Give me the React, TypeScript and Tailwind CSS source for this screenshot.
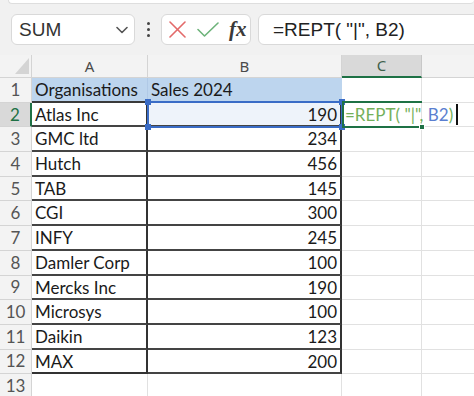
import React from "react";

const rows: [string, string][] = [
  ["Organisations", "Sales 2024"],
  ["Atlas Inc", "190"],
  ["GMC ltd", "234"],
  ["Hutch", "456"],
  ["TAB", "145"],
  ["CGI", "300"],
  ["INFY", "245"],
  ["Damler Corp", "100"],
  ["Mercks Inc", "190"],
  ["Microsys", "100"],
  ["Daikin", "123"],
  ["MAX", "200"],
  ["", ""],
];

function Handle({ cls }: { cls: string }) {
  return <div className={`absolute w-[6px] h-[6px] bg-[#3a6cc6] ${cls}`} />;
}

export default function App() {
  return (
    <div className="relative w-[474px] h-[396px] overflow-hidden bg-[#f1f1f1] font-['Lato',sans-serif]">
      {/* top band */}
      <div className="ml-[8px] h-[4px] rounded-b-[6px] bg-white border-b border-l border-[#dedede]" />

      {/* toolbar */}
      <div className="mt-[10px] h-[31px] flex items-stretch">
        <div className="ml-[11px] w-[124px] rounded-[6px] bg-white border border-[#d9d9d9] flex items-center pl-[7px] pr-[6px]">
          <span className="font-['Liberation_Sans',sans-serif] text-[19px] text-[#333] leading-none flex-1">SUM</span>
          <svg width="12" height="8" viewBox="0 0 12 8">
            <polyline points="1,1.5 6,6.5 11,1.5" fill="none" stroke="#555" strokeWidth="1.6" strokeLinecap="round" strokeLinejoin="round" />
          </svg>
        </div>
        <div className="w-[26px] flex flex-col items-center justify-center gap-[3px]">
          <div className="w-[3px] h-[3px] rounded-full bg-[#444]" />
          <div className="w-[3px] h-[3px] rounded-full bg-[#444]" />
          <div className="w-[3px] h-[3px] rounded-full bg-[#444]" />
        </div>
        <div className="w-[90px] rounded-[6px] bg-white border border-[#d9d9d9] flex items-center pl-[6px]">
          <svg width="17" height="17" viewBox="0 0 17 17" className="ml-[1px]">
            <line x1="1" y1="1" x2="16" y2="16" stroke="#e36a6a" strokeWidth="1.6" strokeLinecap="round" />
            <line x1="16" y1="1" x2="1" y2="16" stroke="#e36a6a" strokeWidth="1.6" strokeLinecap="round" />
          </svg>
          <svg width="22" height="15" viewBox="0 0 22 15" className="ml-[11px]">
            <polyline points="1,7.5 7.5,14 21,1" fill="none" stroke="#6db37a" strokeWidth="1.6" strokeLinecap="round" strokeLinejoin="round" />
          </svg>
          <span className="ml-[10px] font-['Liberation_Serif',serif] italic font-bold text-[21px] leading-none text-[#3a3a3a]">fx</span>
        </div>
        <div className="ml-[7px] flex-1 -mr-[10px] rounded-[6px] bg-white border border-[#d9d9d9] flex items-center pl-[14px]">
          <span className="font-['Liberation_Sans',sans-serif] text-[19px] text-[#222] leading-none whitespace-pre">=REPT( "|", B2)</span>
        </div>
      </div>

      {/* grid */}
      <div className="relative mt-[10px] bg-white">
        {/* column headers */}
        <div className="flex h-[23px] bg-[#f3f3f3] text-[15px] font-['Noto_Sans',sans-serif] text-[#4a4a4a]">
          <div className="w-[32px] border-r border-b border-[#d4d4d4] relative">
            <svg width="14" height="16" viewBox="0 0 14 16" className="absolute left-[15px] top-[3px]">
              <polygon points="14,0 14,16 0,16" fill="#d4d4d4" />
            </svg>
          </div>
          <div className="w-[116px] border-r border-b border-[#d4d4d4] flex items-center justify-center">A</div>
          <div className="w-[194px] border-r border-b border-[#d4d4d4] flex items-center justify-center">B</div>
          <div className="w-[80px] bg-[#d9d9d9] border-r border-[#c8c8c8] border-b-2 border-b-[#1e7145] flex items-center justify-center text-[#3f5f4a]">C</div>
          <div className="flex-1 border-b border-[#d4d4d4]" />
        </div>

        {rows.map(([a, b], i) => {
          const n = i + 1;
          const isHead = n === 1;
          const inTable = n >= 2 && n <= 12;
          const active = n === 2;
          return (
            <div key={n} className="flex h-[24.7px] text-[17px] leading-[24px]">
              <div
                className={
                  active
                    ? "w-[32px] bg-[#d9d9d9] text-[#1e7145] border-r-2 border-r-[#1e7145] border-b border-b-[#d4d4d4] flex items-center justify-center"
                    : "w-[32px] bg-[#f3f3f3] text-[#555] border-r border-b border-[#d4d4d4] flex items-center justify-center"
                }
              >
                {n}
              </div>
              <div
                className={
                  isHead
                    ? "w-[116px] bg-[#bdd5ee] border-r border-r-[#b0c9e6] border-b-2 border-b-[#3a3a3a] pl-[3px] text-[#1a1a1a] whitespace-nowrap"
                    : inTable
                    ? `w-[116px] border-r-2 border-r-[#333] pl-[3px] text-[#1a1a1a] whitespace-nowrap ${n === 12 ? "border-b-2 border-b-[#333]" : "border-b-2 border-b-[#444]"}`
                    : "w-[116px] border-r border-b border-[#e1e1e1]"
                }
              >
                {a}
              </div>
              <div
                className={
                  isHead
                    ? "w-[194px] bg-[#bdd5ee] border-b border-b-[#bdd5ee] pl-[3px] text-[#1a1a1a] whitespace-nowrap"
                    : inTable
                    ? `w-[194px] border-r-2 border-r-[#333] border-b-2 border-b-[#444] pr-[3px] text-right text-[#1a1a1a] ${active ? "bg-[#eef3fa]" : ""}`
                    : "w-[194px] border-r border-b border-[#e1e1e1]"
                }
              >
                {b}
              </div>
              <div className="w-[80px] border-r border-b border-[#e1e1e1] relative">
                {active && (
                  <span className="absolute left-[3px] top-0 whitespace-pre z-10 text-[#74b05a]">
                    {'=REPT( "|", '}
                    <span className="text-[#5b7fd0]">B2</span>
                    {")"}
                  </span>
                )}
              </div>
              <div className="flex-1 border-b border-[#e1e1e1]" />
            </div>
          );
        })}

        {/* blue reference box around B2 */}
        <div className="absolute left-[147px] top-[46px] w-[196px] h-[27px] border-2 border-[#3a6cc6] pointer-events-none">
          <Handle cls="-left-[4px] -top-[4px]" />
          <Handle cls="-right-[4px] -top-[4px]" />
          <Handle cls="-left-[4px] -bottom-[4px]" />
          <Handle cls="-right-[4px] -bottom-[4px]" />
        </div>

        {/* active cell C2 */}
        <div className="absolute left-[342px] top-[46px] w-[80px] h-[27px] border-t-2 border-b-2 border-l-2 border-[#1e7145] pointer-events-none">
          <div className="absolute -right-[3px] -bottom-[4px] w-[6px] h-[6px] bg-[#1e7145] border border-white" />
        </div>

        {/* text cursor */}
        <div className="absolute left-[456px] top-[49px] w-[1.5px] h-[21px] bg-[#111]" />
      </div>
    </div>
  );
}
